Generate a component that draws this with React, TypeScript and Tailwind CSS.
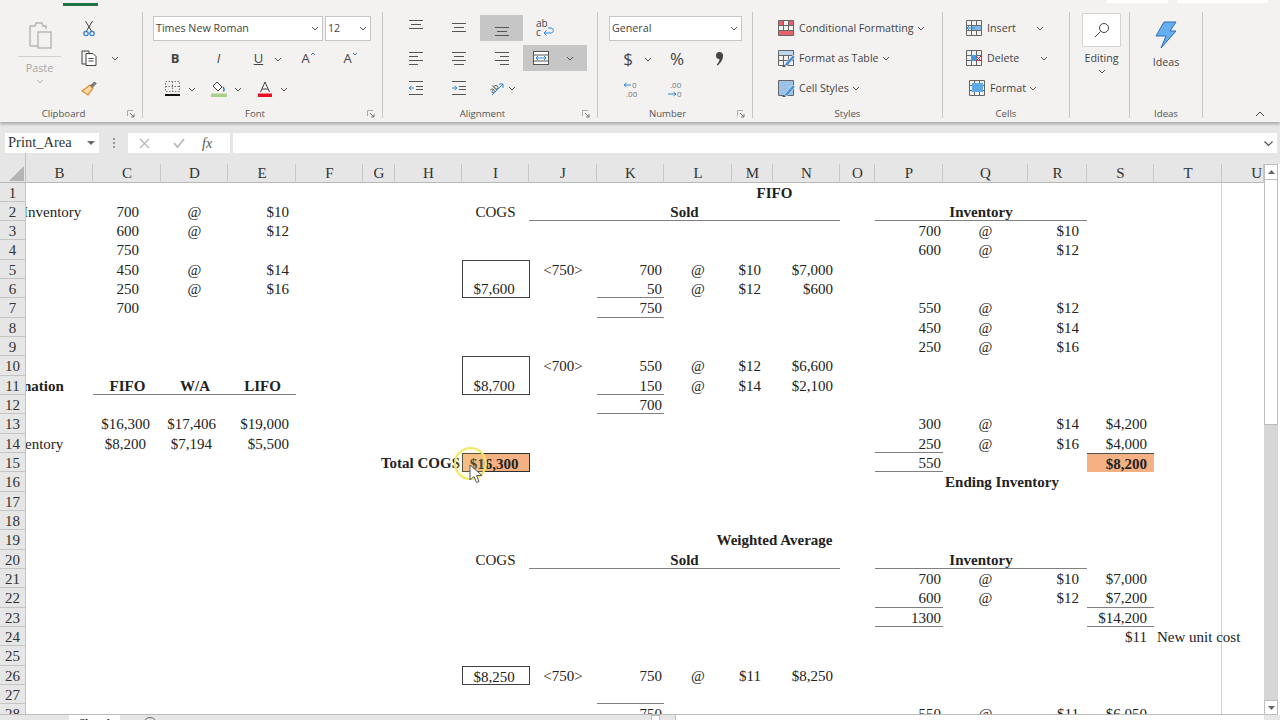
import React from "react";

const ui = "font-['Open_Sans','Noto_Sans',sans-serif]";
const serif = "font-['Liberation_Serif','Times_New_Roman',serif]";

const gridCols = "grid-cols-[26px_67px_68px_67px_68px_67px_32px_67px_67px_68px_67px_68px_41px_67px_35px_68px_85px_59px_67px_68px_42px]";

const col: Record<string, string> = {
  B: "col-start-2", C: "col-start-3", D: "col-start-4", E: "col-start-5", F: "col-start-6",
  G: "col-start-7", H: "col-start-8", I: "col-start-9", J: "col-start-10", K: "col-start-11",
  L: "col-start-12", M: "col-start-13", N: "col-start-14", O: "col-start-15", P: "col-start-16",
  Q: "col-start-17", R: "col-start-18", S: "col-start-19", T: "col-start-20", U: "col-start-21",
};

// per column alignment, the numbers sit at different insets in the sheet
const K = "text-right pr-[2px]";
const MID = "text-center";
const E = "text-right pr-[7px]";
const Mc = "text-right pr-[12px]";
const Nc = "text-right pr-[7px]";
const P = "text-right pr-[2px]";
const Rc = "text-right pr-[8px]";
const Sc = "text-right pr-[7px]";
const Cc = "text-right pr-[22px]";
const Ic = "text-center pr-[4px] mr-[-1px]";
const LINE = "border-b border-[#808080]";
const BOLD = "font-bold";
const TITLE = "col-span-10 text-center font-bold";
const BOXTOP = "mr-[-1px] border-t border-x border-[#404040]";
const BOXBOT = `${Ic} border-b border-x border-[#404040]`;

type Cell = [string, string, string?];

const rows: Record<number, Cell[]> = {
  1: [["I", "FIFO", TITLE]],
  2: [
    ["B", "Inventory", "overflow-hidden indent-[-3px]"], ["C", "700", Cc], ["D", "@", MID], ["E", "$10", E],
    ["I", "COGS", MID], ["J", "Sold", `col-span-5 ${MID} ${BOLD} ${LINE}`], ["P", "Inventory", `col-span-3 ${MID} ${BOLD} ${LINE}`],
  ],
  3: [["C", "600", Cc], ["D", "@", MID], ["E", "$12", E], ["P", "700", P], ["Q", "@", MID], ["R", "$10", Rc]],
  4: [["C", "750", Cc], ["P", "600", P], ["Q", "@", MID], ["R", "$12", Rc]],
  5: [
    ["C", "450", Cc], ["D", "@", MID], ["E", "$14", E], ["I", "", BOXTOP],
    ["J", "<750>", MID], ["K", "700", K], ["L", "@", MID], ["M", "$10", Mc], ["N", "$7,000", Nc],
  ],
  6: [
    ["C", "250", Cc], ["D", "@", MID], ["E", "$16", E], ["I", "$7,600", BOXBOT],
    ["K", "50", `${K} ${LINE}`], ["L", "@", MID], ["M", "$12", Mc], ["N", "$600", Nc],
  ],
  7: [["C", "700", Cc], ["K", "750", `${K} ${LINE}`], ["P", "550", P], ["Q", "@", MID], ["R", "$12", Rc]],
  8: [["P", "450", P], ["Q", "@", MID], ["R", "$14", Rc]],
  9: [["P", "250", P], ["Q", "@", MID], ["R", "$16", Rc]],
  10: [
    ["I", "", BOXTOP], ["J", "<700>", MID], ["K", "550", K], ["L", "@", MID],
    ["M", "$12", Mc], ["N", "$6,600", Nc],
  ],
  11: [
    ["B", "nation", "overflow-hidden indent-[-3px] font-bold"], ["C", "FIFO", `${MID} pl-[1px] ${BOLD} ${LINE}`], ["D", "W/A", `${MID} pl-[1px] ${BOLD} ${LINE}`],
    ["E", "LIFO", `${MID} pl-[1px] ${BOLD} ${LINE}`], ["I", "$8,700", BOXBOT],
    ["K", "150", `${K} ${LINE}`], ["L", "@", MID], ["M", "$14", Mc], ["N", "$2,100", Nc],
  ],
  12: [["K", "700", `${K} ${LINE}`]],
  13: [
    ["C", "$16,300", "text-right pr-[11px]"], ["D", "$17,406", "text-right pr-[12px]"], ["E", "$19,000", E],
    ["P", "300", P], ["Q", "@", MID], ["R", "$14", Rc], ["S", "$4,200", Sc],
  ],
  14: [
    ["B", "entory", "overflow-hidden indent-[-1px]"], ["C", "$8,200", "text-right pr-[15px]"], ["D", "$7,194", "text-right pr-[16px]"], ["E", "$5,500", E],
    ["P", "250", `${P} ${LINE}`], ["Q", "@", MID], ["R", "$16", Rc], ["S", "$4,000", Sc],
  ],
  15: [
    ["G", "Total COGS", "col-span-2 text-right pr-[2px] font-bold"],
    ["I", "$16,300", `${Ic} font-bold bg-[#f4b183] border border-[#303030]`],
    ["P", "550", `${P} ${LINE}`], ["S", "$8,200", `${Sc} font-bold bg-[#f4b183] border-t border-[#505050]`],
  ],
  16: [["P", "Ending Inventory", "col-span-3 text-center font-bold pl-[42px]"]],
  19: [["I", "Weighted Average", TITLE]],
  20: [
    ["I", "COGS", MID], ["J", "Sold", `col-span-5 ${MID} ${BOLD} ${LINE}`], ["P", "Inventory", `col-span-3 ${MID} ${BOLD} ${LINE}`],
  ],
  21: [["P", "700", P], ["Q", "@", MID], ["R", "$10", Rc], ["S", "$7,000", Sc]],
  22: [["P", "600", `${P} ${LINE}`], ["Q", "@", MID], ["R", "$12", Rc], ["S", "$7,200", `${Sc} ${LINE}`]],
  23: [["P", "1300", `${P} ${LINE}`], ["S", "$14,200", `${Sc} ${LINE}`]],
  24: [["S", "$11", Sc], ["T", "New unit cost", "col-span-2 text-left pl-[3px]"]],
  26: [
    ["I", "$8,250", `${Ic} border border-[#404040]`], ["J", "<750>", MID], ["K", "750", K], ["L", "@", MID],
    ["M", "$11", Mc], ["N", "$8,250", Nc],
  ],
  27: [["K", "", LINE]],
  28: [["K", "750", K], ["P", "550", P], ["Q", "@", MID], ["R", "$11", Rc], ["S", "$6,050", Sc]],
};

const headers = ["B","C","D","E","F","G","H","I","J","K","L","M","N","O","P","Q","R","S","T","U"];

const Chev = ({ className = "" }: { className?: string }) => (
  <svg width="8" height="5" viewBox="0 0 8 5" className={className}><path d="M1 1l3 3 3-3" fill="none" stroke="#555" strokeWidth="1" /></svg>
);

const Launcher = () => (
  <svg width="8" height="8" viewBox="0 0 8 8"><path d="M.5 6V.5H6" fill="none" stroke="#aaa" /><path d="M3 3l4 4M7 4v3H4" fill="none" stroke="#777" /></svg>
);

const Group = ({ w, label, launcher, pl = "", children }: { w: string; label: string; launcher?: boolean; pl?: string; children: React.ReactNode }) => (
  <div className={`${w} h-[106px] shrink-0 border-r border-[#c8c6c4] relative flex flex-col`}>
    <div className={`flex-1 ${pl}`}>{children}</div>
    <div className={`h-[15px] mb-[-4px] flex items-center justify-center text-[9.6px] text-[#555] ${launcher ? "pr-[15px]" : ""}`}>{label}</div>
    {launcher && <div className="absolute right-[7px] bottom-[0px] flex"><Launcher /></div>}
  </div>
);

const Btn = ({ w, children, sel }: { w: string; children?: React.ReactNode; sel?: boolean }) => (
  <div className={`${w} h-[26px] shrink-0 flex items-center justify-center ${sel ? "bg-[#c6c6c6]" : ""}`}>{children}</div>
);

const Lines = ({ d }: { d: string }) => (
  <svg width="16" height="16" viewBox="0 0 16 16"><path d={d} fill="none" stroke="#555" strokeWidth="1" /></svg>
);

const Grid3 = ({ children }: { children?: React.ReactNode }) => (
  <svg width="17" height="17" viewBox="0 0 17 17" className="shrink-0">
    <path d="M.5.5h15v15H.5zM.5 5.5h15M.5 10.5h15M5.5.5v15M10.5.5v15" fill="none" stroke="#666" />
    {children}
  </svg>
);

const Brush = () => (
  <g><path d="M6 15l9-10 2 2-8 9z" fill="#3f8fd2" stroke="#f3f2f1" strokeWidth=".6" /><path d="M6 15l-2 2h4z" fill="#555" /></g>
);

const Dropdown = ({ w, text, className = "" }: { w: string; text: string; className?: string }) => (
  <div className={`${w} h-[25px] bg-white border border-[#c8c6c4] flex items-center justify-between pl-[2px] pr-[3px] text-[10.7px] text-[#444] ${className}`}>
    <span>{text}</span><Chev />
  </div>
);

const StyleRow = ({ icon, text, chevGap = "ml-[3px]", chev = true }: { icon: React.ReactNode; text: string; chevGap?: string; chev?: boolean }) => (
  <div className="h-[26px] flex items-center mb-[4px] text-[10.7px] text-[#444]">
    {icon}<span className="ml-[4px] whitespace-nowrap">{text}</span>{chev && <Chev className={chevGap} />}
  </div>
);

function Ribbon() {
  return (
    <div className={`${ui} h-[122px] bg-[#f3f2f1] shrink-0 relative z-10 shadow-[0_2px_3px_rgba(0,0,0,0.28)]`}>
      <div className="h-[12px] flex items-start">
        <div className="ml-[63px] mt-[3px] h-[2.5px] w-[35px] bg-[#217346]" />
        <div className="ml-[1009px] h-[3px] w-[61px] bg-white" />
        <div className="ml-[9px] h-[3px] w-[91px] bg-white" />
      </div>
      <div className="flex">
        {/* Clipboard */}
        <Group w="w-[143px]" label="Clipboard" launcher>
          <div className="flex">
            <div className="ml-[18px] w-[43px] flex flex-col items-center pt-[9px]">
              <svg width="28" height="28" viewBox="0 0 28 28">
                <path d="M4 25V5h5l1-3h6l1 3h3v3" fill="none" stroke="#b4b4b4" strokeWidth="1.4" />
                <rect x="12" y="11" width="13" height="16" fill="#f3f2f1" stroke="#b4b4b4" strokeWidth="1.4" />
                <path d="M4 25h8" stroke="#b4b4b4" strokeWidth="1.4" />
              </svg>
              <div className="w-[43px] border-t border-[#d0d0d0] mt-[7px]" />
              <div className="text-[10.7px] text-[#a6a6a6] mt-[4px] leading-[14px]">Paste</div>
              <Chev className="mt-[4px] opacity-40" />
            </div>
            <div className="ml-[15px] pt-[3px]">
              <Btn w="w-[26px]">
                <svg width="12" height="17" viewBox="0 0 12 17"><path d="M2.5 1l6 10M9.500 1l-6 10" stroke="#444" fill="none" /><circle cx="3" cy="13.500" r="2.200" fill="none" stroke="#2b7cd3" strokeWidth="1.200" /><circle cx="9" cy="13.500" r="2.200" fill="none" stroke="#2b7cd3" strokeWidth="1.200" /></svg>
              </Btn>
              <div className="h-[4px]" />
              <div className="flex items-center">
                <Btn w="w-[26px]">
                  <svg width="17" height="16" viewBox="0 0 17 16"><path d="M5 14H1V1h7v2" fill="none" stroke="#444" /><path d="M5 3.500h7l3 3v9H5z" fill="#fff" stroke="#444" /><path d="M7.500 8.500h5M7.500 11h5" stroke="#444" /></svg>
                </Btn>
                <Chev className="ml-[9px]" />
              </div>
              <div className="h-[4px]" />
              <Btn w="w-[26px]">
                <svg width="16" height="15" viewBox="0 0 16 15"><path d="M9 4l3 3-5 7-6-4z" fill="#fbd9a8" stroke="#e08a25" strokeWidth="1.200" /><path d="M9.500 5l4-4 1.500 1.500-4 4" fill="#888" stroke="#555" /></svg>
              </Btn>
            </div>
          </div>
        </Group>

        {/* Font */}
        <Group w="w-[240px]" label="Font" launcher pl="pl-[10px] pt-[4px]">
          <div className="flex gap-[2px] mb-[5px]">
            <Dropdown w="w-[170px]" text="Times New Roman" />
            <Dropdown w="w-[46px]" text="12" />
          </div>
          <div className="flex items-center h-[26px] mb-[4px] text-[#444]">
            <Btn w="w-[44px]"><span className="font-bold text-[13px]">B</span></Btn>
            <Btn w="w-[43px]"><span className="italic text-[13px]">I</span></Btn>
            <Btn w="w-[37px]"><span className="underline text-[13px]">U</span></Btn>
            <Chev className="ml-[-3px]" />
            <Btn w="w-[47px]"><span className="text-[13px] ml-[6px]">A</span><svg width="6" height="4" viewBox="0 0 6 4" className="mb-[10px]"><path d="M1 3l2-2 2 2" fill="none" stroke="#2b7cd3" /></svg></Btn>
            <Btn w="w-[43px]"><span className="text-[13px]">A</span><svg width="6" height="4" viewBox="0 0 6 4" className="mb-[10px]"><path d="M1 1l2 2 2-2" fill="none" stroke="#2b7cd3" /></svg></Btn>
          </div>
          <div className="flex items-center h-[26px]">
            <div className="w-[20px] ml-[9px] flex justify-center">
              <svg width="15" height="16" viewBox="0 0 15 16"><path d="M.5.5h14v10H.5zM7.500.5v10M.5 5.500h14" fill="none" stroke="#777" strokeDasharray="1.500 1.500" /><rect y="13" width="15" height="2" fill="#111" /></svg>
            </div>
            <Chev className="ml-[6px]" />
            <div className="w-[20px] ml-[13px] flex justify-center">
              <svg width="16" height="16" viewBox="0 0 16 16"><path d="M6 1l5 5-4 4-5-5z" fill="#fff" stroke="#444" /><path d="M12 6c1.500 2 1.500 4 0 4" fill="none" stroke="#2b7cd3" strokeWidth="1.500" /><rect y="12.500" width="16" height="3.500" fill="#a9d18e" /></svg>
            </div>
            <Chev className="ml-[5px]" />
            <div className="w-[20px] ml-[13px] flex justify-center">
              <svg width="16" height="16" viewBox="0 0 16 16"><path d="M3.500 11L8 1l4.500 10M5 8h6" fill="none" stroke="#444" /><rect x="1" y="12.500" width="14" height="3.500" fill="#e81123" /></svg>
            </div>
            <Chev className="ml-[5px]" />
          </div>
        </Group>

        {/* Alignment */}
        <Group w="w-[215px]" label="Alignment" launcher pl="pl-[11px] pt-[3px]">
          <div className="flex mb-[4px]">
            <Btn w="w-[43px]"><div className="mb-[6px] flex"><Lines d="M1 3.500h14M3 7.500h10M1 11.500h14" /></div></Btn>
            <Btn w="w-[43px]"><Lines d="M1 3.500h14M3 7.500h10M1 11.500h14" /></Btn>
            <Btn w="w-[43px]" sel><div className="mt-[8px] flex"><Lines d="M1 3.500h14M3 7.500h10M1 11.500h14" /></div></Btn>
            <Btn w="w-[43px]">
              <svg width="20" height="20" viewBox="0 0 20 20">
                <text x="1" y="9" fontSize="10" fill="#444" fontFamily="Open Sans">ab</text>
                <text x="1" y="18" fontSize="10" fill="#444" fontFamily="Open Sans">c</text>
                <path d="M9 15h7c3 0 3-5 0-5h-3M9 15l2.500-2.500M9 15l2.500 2.500" fill="none" stroke="#2b88d8" />
              </svg>
            </Btn>
          </div>
          <div className="flex mb-[4px]">
            <Btn w="w-[43px]"><Lines d="M1 2.500h14M1 6.500h9M1 10.500h14M1 14.500h9" /></Btn>
            <Btn w="w-[43px]"><Lines d="M1 2.500h14M3 6.500h10M1 10.500h14M3 14.500h10" /></Btn>
            <Btn w="w-[43px]"><Lines d="M1 2.500h14M6 6.500h9M1 10.500h14M6 14.500h9" /></Btn>
            <div className="w-[64px] h-[26px] bg-[#c6c6c6] flex items-center">
              <svg width="16" height="16" viewBox="0 0 16 16" className="ml-[10px]"><rect x=".5" y="1.500" width="15" height="13" fill="#fff" stroke="#555" /><path d="M.5 5h15M.5 11h15" stroke="#555" /><path d="M3 8h10M3 8l2-2M3 8l2 2M13 8l-2-2M13 8l-2 2" fill="none" stroke="#2b88d8" /></svg>
              <Chev className="ml-[17px]" />
            </div>
          </div>
          <div className="flex">
            <Btn w="w-[43px]"><svg width="16" height="16" viewBox="0 0 16 16"><path d="M1 1.500h14M8 6.500h7M8 9.500h7M1 14.500h14" fill="none" stroke="#555" /><path d="M1 8h5M1 8l2.500-2M1 8l2.500 2" fill="none" stroke="#2b88d8" /></svg></Btn>
            <Btn w="w-[43px]"><svg width="16" height="16" viewBox="0 0 16 16"><path d="M1 1.500h14M8 6.500h7M8 9.500h7M1 14.500h14" fill="none" stroke="#555" /><path d="M1 8h5M6 8l-2.500-2M6 8l-2.500 2" fill="none" stroke="#2b88d8" /></svg></Btn>
            <div className="w-[43px] h-[26px] flex items-center justify-center">
              <svg width="17" height="17" viewBox="0 0 17 17"><text x="1" y="11" fontSize="8" fill="#444" fontFamily="Open Sans" transform="rotate(-45 6 8)">ab</text><path d="M4 15L15 4M15 4h-4M15 4v4" fill="none" stroke="#2b88d8" /></svg>
              <Chev className="ml-[3px]" />
            </div>
          </div>
        </Group>

        {/* Number */}
        <Group w="w-[155px]" label="Number" launcher pl="pl-[11px] pt-[4px]">
          <Dropdown w="w-[133px]" text="General" className="mb-[5px]" />
          <div className="flex items-center h-[26px] mb-[4px] text-[#444]">
            <div className="w-[20px] text-center text-[17px] ml-[9px]">$</div>
            <Chev className="ml-[6px]" />
            <div className="w-[30px] ml-[10px] text-center text-[17px]">%</div>
            <svg width="8" height="14" viewBox="0 0 8 14" className="ml-[24px]"><path d="M3.500 0a3.500 3.500 0 0 1 3.500 3.700c0 4-2.500 7.500-5.500 9.800l-.8-.8c1.800-2 2.800-3.800 2.800-5.700A3.500 3.500 0 0 1 3.500 0z" fill="#444" /></svg>
          </div>
          <div className="flex items-center h-[26px]">
            <svg width="18" height="18" viewBox="0 0 18 18" className="ml-[14px]"><text x="9" y="8" fontSize="8" fill="#777" fontFamily="Open Sans">0</text><text x="3" y="17" fontSize="8" fill="#777" fontFamily="Open Sans">.00</text><path d="M1 5h7M1 5l2.500-2M1 5l2.500 2" fill="none" stroke="#2b88d8" /></svg>
            <svg width="18" height="18" viewBox="0 0 18 18" className="ml-[26px]"><text x="3" y="8" fontSize="8" fill="#777" fontFamily="Open Sans">.00</text><text x="10" y="17" fontSize="8" fill="#777" fontFamily="Open Sans">0</text><path d="M1 14h8M9 14l-2.500-2M9 14l-2.500 2" fill="none" stroke="#2b88d8" /></svg>
          </div>
        </Group>

        {/* Styles */}
        <Group w="w-[190px]" label="Styles" pl="pl-[25px] pt-[3px]">
          <StyleRow text="Conditional Formatting" icon={<Grid3><rect x="1" y="1" width="4" height="4" fill="#e8606a" /><rect x="11" y="1" width="4" height="4" fill="#e8606a" /><rect x="1" y="11" width="14" height="4" fill="#e8606a" /></Grid3>} />
          <StyleRow text="Format as Table" icon={<Grid3><rect x="1" y="1" width="14" height="4" fill="#bcd6ee" /><Brush /></Grid3>} />
          <StyleRow text="Cell Styles" icon={<Grid3><rect x="1" y="1" width="14" height="14" fill="#9cc3e6" /><Brush /></Grid3>} />
        </Group>

        {/* Cells */}
        <Group w="w-[127px]" label="Cells" pl="pl-[23px] pt-[3px]">
          <StyleRow text="Insert" chevGap="ml-[20px]" icon={<Grid3><rect x="6" y="6" width="9" height="4" fill="#7db7e8" /><path d="M1 8h8M1 8l3-3M1 8l3 3" fill="none" stroke="#2b88d8" /></Grid3>} />
          <StyleRow text="Delete" chevGap="ml-[21px]" icon={<Grid3><rect x="5" y="5" width="6" height="6" fill="#3f9be0" /><path d="M10 6l5 5M15 6l-5 5" stroke="#e81123" /></Grid3>} />
          <div className="pl-[3px]"><StyleRow text="Format" icon={<Grid3><rect x="3" y="3" width="11" height="9" fill="#5ea9e6" /></Grid3>} /></div>
        </Group>

        {/* Editing */}
        <Group w="w-[60px]" label="" pl="pl-[12px]">
          <div className="w-[39px] h-[34px] bg-white border border-[#d4d4d4] mt-[1px] flex items-center justify-center">
            <svg width="16" height="16" viewBox="0 0 16 16"><circle cx="10" cy="6" r="4.500" fill="none" stroke="#444" /><path d="M6.500 9.500L1 15" stroke="#444" /></svg>
          </div>
          <div className="w-[39px] text-center text-[10.7px] text-[#444] mt-[3px] leading-[16px] whitespace-nowrap">Editing</div>
          <div className="w-[39px] flex justify-center mt-[3px]"><Chev /></div>
        </Group>

        {/* Ideas */}
        <Group w="w-[73px]" label="Ideas">
          <div className="flex flex-col items-center pt-[9px]">
            <svg width="22" height="28" viewBox="0 0 22 28"><path d="M9 1h12l-6 9h6L6 27l5-12H1z" fill="#66aef0" stroke="#2b6fb3" /></svg>
            <div className="text-[10.7px] text-[#444] mt-[5px] leading-[16px]">Ideas</div>
          </div>
        </Group>

        <div className="flex-1 relative">
          <svg width="10" height="6" viewBox="0 0 10 6" className="absolute right-[15px] bottom-[1px]"><path d="M1 5l4-4 4 4" fill="none" stroke="#444" /></svg>
        </div>
      </div>
    </div>
  );
}

function FormulaBar() {
  return (
    <div className="h-[31px] bg-[#e6e6e6] shrink-0 pt-[11px] flex">
      <div className={`ml-[5px] w-[94px] h-[20px] bg-white flex items-center justify-between pl-[3px] pr-[4px] text-[14.5px] text-[#333] ${serif}`}>
        <span>Print_Area</span>
        <svg width="8" height="4" viewBox="0 0 8 4"><path d="M0 0h8L4 4z" fill="#666" /></svg>
      </div>
      <div className="w-[29px] flex flex-col items-center justify-center gap-[2px]">
        <div className="w-[2px] h-[2px] bg-[#999]" /><div className="w-[2px] h-[2px] bg-[#999]" /><div className="w-[2px] h-[2px] bg-[#999]" />
      </div>
      <div className="w-[102px] h-[20px] bg-white flex items-center pl-[11px]">
        <svg width="11" height="11" viewBox="0 0 11 11"><path d="M1 1l9 9M10 1l-9 9" stroke="#b8b8b8" strokeWidth="1.300" /></svg>
        <svg width="12" height="10" viewBox="0 0 12 10" className="ml-[23px]"><path d="M1 5l3.500 4L11 1" fill="none" stroke="#b8b8b8" strokeWidth="1.800" /></svg>
        <span className={`${serif} italic text-[#555] text-[14px] ml-[17px]`}>fx</span>
      </div>
      <div className="ml-[3px] flex-1 mr-[3px] h-[20px] bg-white flex items-center justify-end pr-[4px]">
        <svg width="9" height="5" viewBox="0 0 9 5"><path d="M.5.5l4 4 4-4" fill="none" stroke="#555" strokeWidth="1.200" /></svg>
      </div>
    </div>
  );
}

function ColumnHeaders() {
  return (
    <div className={`h-[29.500px] bg-[#e6e6e6] border-b border-[#b8b8b8] grid ${gridCols} ${serif} text-[15px] text-[#333]`}>
      <div className="col-start-1 row-start-1 border-r border-[#c0c0c0] flex items-end justify-end pb-[2px] pr-[1px]">
        <svg width="15" height="15" viewBox="0 0 15 15"><path d="M15 0v15H0z" fill="#b4b4b4" /></svg>
      </div>
      {headers.map((h) => (
        <div key={h} className={`${col[h]} row-start-1 flex items-end justify-center h-[29.500px]`}>
          <div className={`h-[19px] w-full leading-[19px] border-r border-[#c8c8c8] ${h === "U" ? "text-right pr-[1px]" : "text-center pl-[1px]"}`}>{h}</div>
        </div>
      ))}
    </div>
  );
}

function Row({ n }: { n: number }) {
  return (
    <div className={`h-[19.330px] grid grid-rows-[19.330px] ${gridCols} leading-[20.500px] whitespace-nowrap`}>
      <div className="col-start-1 row-start-1 bg-[#e6e6e6] border-r border-b border-[#c4c4c4] text-center text-[#333]">{n}</div>
      <div className="col-start-20 row-start-1 border-r border-[#d0d0d0]" />
      {(rows[n] || []).map(([c, text, cls], i) => (
        <div key={i} className={`${col[c]} row-start-1 ${cls || ""}`}>{text}</div>
      ))}
    </div>
  );
}

function Scrollbar() {
  return (
    <div className="w-[16px] shrink-0 flex flex-col bg-white">
      <div className="h-[11px] bg-[#e6e6e6] w-full" />
      <div className="w-[14px] h-[16px] border border-[#bdbdbd] bg-white flex items-center justify-center">
        <svg width="7" height="4" viewBox="0 0 7 4"><path d="M0 4h7L3.500 0z" fill="#666" /></svg>
      </div>
      <div className="w-[14px] h-[245px] border border-[#bdbdbd] border-t-0 bg-white" />
      <div className="w-[14px] flex-1 bg-[#d6d6d6]" />
      <div className="w-[14px] h-[15px] border border-[#bdbdbd] bg-white flex items-center justify-center">
        <svg width="7" height="4" viewBox="0 0 7 4"><path d="M0 0h7L3.500 4z" fill="#666" /></svg>
      </div>
      <div className="h-[5px] bg-[#e6e6e6] w-full" />
    </div>
  );
}

export default function App() {
  const nums = Array.from({ length: 28 }, (_, i) => i + 1);
  return (
    <div className={`relative w-[1280px] h-[720px] overflow-hidden flex flex-col bg-white ${serif} text-[15px] text-[#222]`}>
      <Ribbon />
      <FormulaBar />
      <div className="flex flex-1 min-h-0">
        <div className="w-[1264px] flex flex-col min-h-0">
          <ColumnHeaders />
          <div className="flex-1 min-h-0 overflow-hidden">
            {nums.map((n) => <Row key={n} n={n} />)}
          </div>
          <div className="h-[6px] shrink-0 bg-[#e6e6e6] border-t border-[#bdbdbd] flex">
            <div className="ml-[69px] w-[51px] h-[6px] bg-white overflow-hidden text-center text-[11px] font-bold leading-[14px]">Sheet4</div>
            <div className="ml-[23px] mt-[2px] w-[14px] h-[14px] rounded-full border border-[#666]" />
            <div className="ml-[494px] w-[9px] h-[6px] bg-white border border-[#bdbdbd]" />
            <div className="ml-[15px] flex-1 bg-white border-l border-[#bdbdbd]" />
          </div>
        </div>
        <Scrollbar />
      </div>

      {/* recording highlight around the mouse pointer */}
      <div className="absolute left-[454px] top-[447px] w-[33px] h-[33px] rounded-full border-2 border-[#efe860] bg-[#f7f08a]/20" />
      <svg width="15" height="21" viewBox="0 0 15 21" className="absolute left-[469px] top-[464px]">
        <path d="M1 1v15l4-3.500 2.500 6 2.500-1-2.500-6H13z" fill="#fff" stroke="#555" strokeWidth="1" />
      </svg>
    </div>
  );
}
